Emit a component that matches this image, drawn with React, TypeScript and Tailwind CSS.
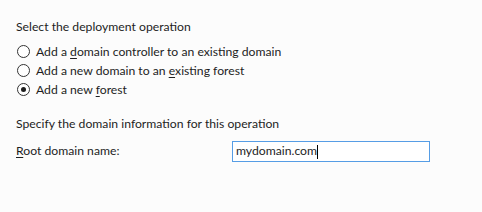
import React from "react";

function Radio({ checked, children }: { checked?: boolean; children: React.ReactNode }) {
  return (
    <div className="flex items-center h-[19px]">
      <span className="w-[13px] h-[13px] rounded-full border border-[#333333] bg-white flex items-center justify-center ml-[1px]">
        {checked && <span className="w-[5px] h-[5px] rounded-full bg-[#1e1e1e]" />}
      </span>
      <span className="ml-[6px]">{children}</span>
    </div>
  );
}

export default function App() {
  return (
    <div
      className="w-[482px] h-[212px] bg-[#fcfcfc] text-[#1e1e1e] text-[12.2px] pl-[16px] pt-[17px]"
      style={{ fontFamily: 'Lato, "Open Sans", sans-serif' }}
    >
      <div className="h-[19px] leading-[19px]">Select the deployment operation</div>
      <div className="mt-[6px] flex flex-col leading-[19px]">
        <Radio>
          Add a <u className="underline-offset-2">d</u>omain controller to an existing domain
        </Radio>
        <Radio>
          Add a new domain to an <u className="underline-offset-2">e</u>xisting forest
        </Radio>
        <Radio checked>
          Add a new <u className="underline-offset-2">f</u>orest
        </Radio>
      </div>
      <div className="mt-[15px] h-[19px] leading-[19px]">Specify the domain information for this operation</div>
      <div className="mt-[8px] flex items-center">
        <div className="w-[216px]">
          <u className="underline-offset-2">R</u>oot domain name:
        </div>
        <div className="w-[198px] h-[21px] border border-[#569de5] bg-white flex items-center pl-[3px]">
          <span>mydomain.com</span>
          <span className="w-[1px] h-[14px] bg-black" />
        </div>
      </div>
    </div>
  );
}
